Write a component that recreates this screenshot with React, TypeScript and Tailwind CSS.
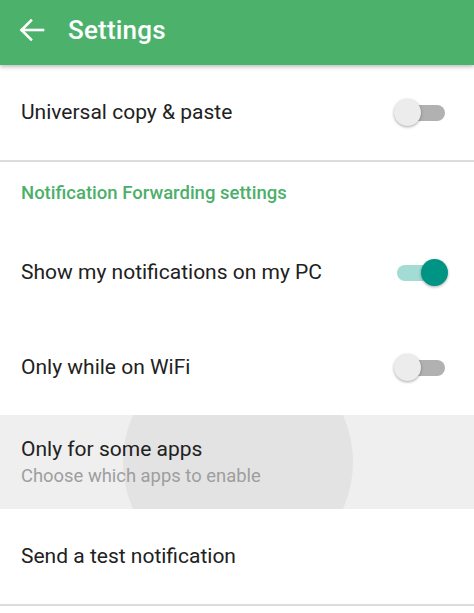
import React from "react";

function Toggle({ on }: { on: boolean }) {
  return (
    <div className="relative w-[54px] h-[28px] flex items-center">
      <div
        className={
          on
            ? "ml-[3px] w-[48px] h-[16px] rounded-full bg-[#a3dbd5]"
            : "ml-[3px] w-[48px] h-[16px] rounded-full bg-[#b1b1b1]"
        }
      />
      <div
        className={
          on
            ? "absolute right-0 top-0 w-[27px] h-[27px] rounded-full bg-[#009485] shadow-[0_1px_3px_rgba(0,0,0,0.35)]"
            : "absolute left-0 top-0 w-[27px] h-[27px] rounded-full bg-[#ececec] shadow-[0_1px_3px_rgba(0,0,0,0.35)]"
        }
      />
    </div>
  );
}

export default function App() {
  return (
    <div
      className="w-[474px] h-[613px] bg-white overflow-hidden flex flex-col"
      style={{ fontFamily: "Roboto, 'Noto Sans', sans-serif" }}
    >
      <div className="relative z-10 h-[65px] shrink-0 bg-[#4cb26b] flex items-center pb-[5px] shadow-[0_2px_4px_rgba(0,0,0,0.25)]">
        <svg
          className="ml-[19px]"
          width="26"
          height="24"
          viewBox="0 0 26 24"
          fill="none"
          stroke="white"
          strokeWidth="2.6"
          strokeLinecap="square"
        >
          <path d="M3 12 H24" />
          <path d="M12 2.5 L2.5 12 L12 21.5" />
        </svg>
        <span className="ml-[23px] text-white text-[26px] font-medium leading-none tracking-[0.2px]">
          Settings
        </span>
      </div>

      <div className="h-[95px] shrink-0 flex items-center justify-between pl-[21px] pr-[26px]">
        <span className="text-[21px] text-[#212121]">Universal copy &amp; paste</span>
        <Toggle on={false} />
      </div>
      <div className="h-[2px] shrink-0 bg-[#dcdcdc]" />

      <div className="h-[63px] shrink-0 flex items-center pl-[21px]">
        <span className="text-[18.5px] font-medium text-[#4caf6a]">
          Notification Forwarding settings
        </span>
      </div>

      <div className="h-[95px] shrink-0 flex items-center justify-between pl-[21px] pr-[26px]">
        <span className="text-[21px] text-[#212121]">Show my notifications on my PC</span>
        <Toggle on={true} />
      </div>

      <div className="h-[95px] shrink-0 flex items-center justify-between pl-[21px] pr-[26px]">
        <span className="text-[21px] text-[#212121]">Only while on WiFi</span>
        <Toggle on={false} />
      </div>

      <div className="relative h-[94px] shrink-0 bg-[#efefef] overflow-hidden flex flex-col justify-center pl-[21px]">
        <div className="absolute left-[123px] top-[-68px] w-[230px] h-[230px] rounded-full bg-[#e3e3e3]" />
        <span className="relative text-[21px] leading-[27px] text-[#212121]">Only for some apps</span>
        <span className="relative text-[18.4px] leading-[25px] text-[#9e9e9e]">
          Choose which apps to enable
        </span>
      </div>

      <div className="h-[95px] shrink-0 flex items-center pl-[21px]">
        <span className="text-[21px] text-[#212121]">Send a test notification</span>
      </div>
      <div className="h-[2px] shrink-0 bg-[#dcdcdc]" />
    </div>
  );
}
